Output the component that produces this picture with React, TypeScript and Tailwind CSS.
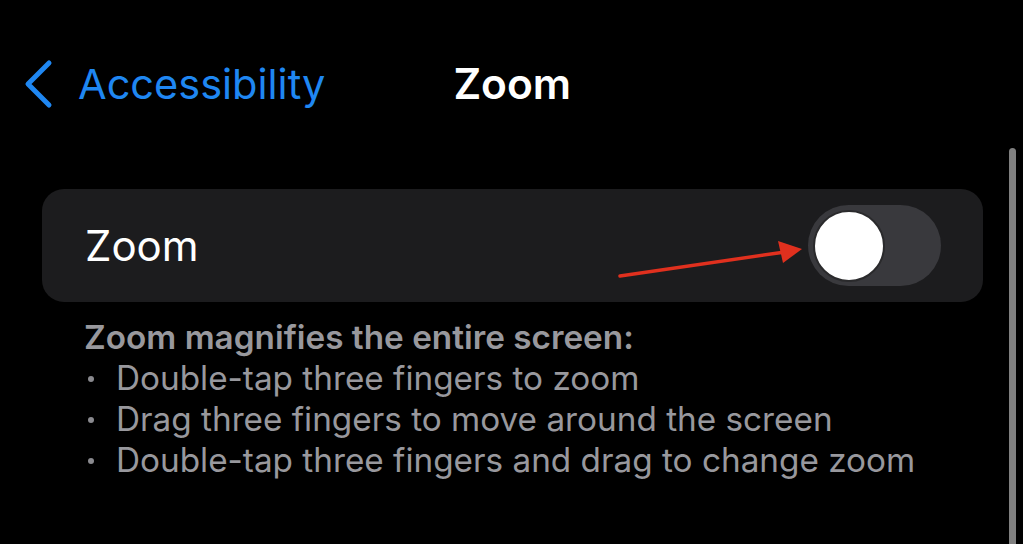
import React from "react";

function Toggle() {
  return (
    <div className="relative flex h-[81px] w-[133px] items-center rounded-full bg-[#39393d] px-[5px]">
      <div className="h-[72px] w-[72px] rounded-full border-2 border-[#2a2a2c] bg-white" />
    </div>
  );
}

function Arrow() {
  return (
    <svg className="absolute left-[610px] top-[236px]" width="200" height="50" viewBox="0 0 200 50">
      <line x1="10" y1="40" x2="175" y2="16" stroke="#e0301e" strokeWidth="3.5" strokeLinecap="round" />
      <polygon points="192,13 168,5 173,27" fill="#e0301e" />
    </svg>
  );
}

export default function App() {
  const bullets = [
    "Double-tap three fingers to zoom",
    "Drag three fingers to move around the screen",
    "Double-tap three fingers and drag to change zoom",
  ];

  return (
    <div className="relative h-[544px] w-[1023px] overflow-hidden bg-black font-['Inter',sans-serif]">
      {/* nav bar */}
      <div className="flex h-[168px] items-start pt-[56px]">
        <div className="flex items-center pl-[22px]">
          <svg width="32" height="50" viewBox="0 0 32 50">
            <path d="M27 4 L6 25 L27 46" fill="none" stroke="#1f87f2" strokeWidth="5" strokeLinecap="round" strokeLinejoin="round" />
          </svg>
          <span className="ml-[24px] text-[41.5px] leading-[56px] text-[#1f87f2]">Accessibility</span>
        </div>
        <span className="ml-[128px] text-[42.5px] font-semibold leading-[56px] text-white">Zoom</span>
      </div>

      {/* scrollbar */}
      <div className="absolute right-[7px] top-[148px] h-[400px] w-[7px] rounded-full bg-[#808080]" />

      <div className="pl-[42px] pr-[40px] pt-[21px]">
        <div className="flex h-[113px] items-center justify-between rounded-[22px] bg-[#1c1c1e] pl-[43px] pr-[42px]">
          <span className="text-[42px] text-white">Zoom</span>
          <Toggle />
        </div>

        <div className="pl-[42px] pt-[15px] text-[33.3px] leading-[41px] text-[#98989d]">
          <div className="font-semibold">Zoom magnifies the entire screen:</div>
          {bullets.map((b) => (
            <div key={b} className="flex items-center">
              <span className="flex w-[32px] justify-start pl-[4px]">
                <span className="h-[6px] w-[6px] rounded-full bg-[#8a8a8f]" />
              </span>
              <span>{b}</span>
            </div>
          ))}
        </div>
      </div>

      <Arrow />
    </div>
  );
}
